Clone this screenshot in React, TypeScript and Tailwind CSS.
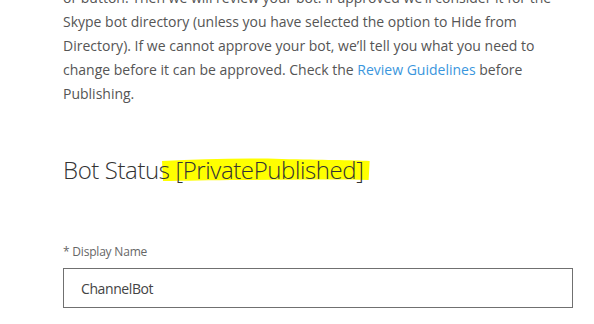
import React from "react";

export default function App() {
  const lines = [
    "or button. Then we will review your bot. If approved we\u2019ll consider it for the",
    "Skype bot directory (unless you have selected the option to Hide from",
    "Directory). If we cannot approve your bot, we\u2019ll tell you what you need to",
  ];
  return (
    <div
      className="w-[594px] h-[324px] overflow-hidden bg-white pl-[63px]"
      style={{ fontFamily: '"Open Sans", "Noto Sans", sans-serif' }}
    >
      <div className="-mt-[14px] text-[14px] leading-[24px] text-[#555555] whitespace-nowrap">
        {lines.map((l) => (
          <div key={l}>{l}</div>
        ))}
        <div>
          change before it can be approved. Check the{" "}
          <span className="text-[#3a96dd]">Review Guidelines</span> before
        </div>
        <div>Publishing.</div>
      </div>

      <h2 className="mt-[48px] text-[24px] leading-[32px] font-light tracking-[-0.4px] text-[#333333] whitespace-nowrap">
        Bot Statu
        <span className="relative inline-block">
          <svg
            className="absolute left-[3px] top-[3px] h-[26px] w-[calc(100%+5px)]"
            viewBox="0 0 210 26"
            preserveAspectRatio="none"
          >
            <path
              d="M0 4 C40 2 80 1 120 2 C160 3 190 3 208 4 L207 23 C170 22 120 23 80 23 C50 23 20 24 1 24 Z"
              fill="#ffff00"
            />
          </svg>
          <span className="relative">s [PrivatePublished]</span>
        </span>
      </h2>

      <div className="mt-[58px] text-[12px] leading-[16px] tracking-[-0.2px] text-[#666666]">* Display Name</div>
      <div className="mt-[8px] w-[510px] h-[40px] border border-[#707070] flex items-center pl-[17px] text-[14px] tracking-[-0.4px] text-[#444444]">
        ChannelBot
      </div>
    </div>
  );
}
